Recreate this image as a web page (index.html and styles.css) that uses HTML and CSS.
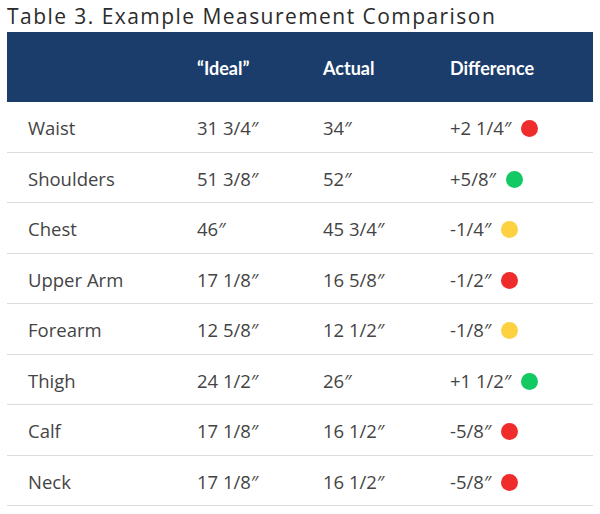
FILE: index.html
```html
<!DOCTYPE html>
<html>
<head>
<meta charset="utf-8">
<link rel="stylesheet" href="styles.css">
</head>
<body>
<div class="wrap">
  <h1 class="title">Table 3. Example Measurement Comparison</h1>
  <table class="cmp">
    <thead>
      <tr><th></th><th>“Ideal”</th><th>Actual</th><th>Difference</th></tr>
    </thead>
    <tbody>
      <tr><td>Waist</td><td>31 3/4″</td><td>34″</td><td>+2 1/4″<span class="dot red"></span></td></tr>
      <tr><td>Shoulders</td><td>51 3/8″</td><td>52″</td><td>+5/8″<span class="dot green"></span></td></tr>
      <tr><td>Chest</td><td>46″</td><td>45 3/4″</td><td>-1/4″<span class="dot yellow"></span></td></tr>
      <tr><td>Upper Arm</td><td>17 1/8″</td><td>16 5/8″</td><td>-1/2″<span class="dot red"></span></td></tr>
      <tr><td>Forearm</td><td>12 5/8″</td><td>12 1/2″</td><td>-1/8″<span class="dot yellow"></span></td></tr>
      <tr><td>Thigh</td><td>24 1/2″</td><td>26″</td><td>+1 1/2″<span class="dot green"></span></td></tr>
      <tr><td>Calf</td><td>17 1/8″</td><td>16 1/2″</td><td>-5/8″<span class="dot red"></span></td></tr>
      <tr><td>Neck</td><td>17 1/8″</td><td>16 1/2″</td><td>-5/8″<span class="dot red"></span></td></tr>
    </tbody>
  </table>
</div>
</body>
</html>
```

FILE: styles.css
```css
html, body {
  margin: 0;
  padding: 0;
  background: #ffffff;
}
.wrap {
  padding: 0 0 0 7px;
  width: 586px;
}
.title {
  margin: 0;
  height: 32px;
  font-family: "Open Sans", "Noto Sans", sans-serif;
  font-weight: 400;
  font-size: 21px;
  letter-spacing: 1.45px;
  line-height: 32px;
  color: #2b2b2b;
  white-space: nowrap;
}
.cmp {
  border-collapse: collapse;
  table-layout: fixed;
  width: 586px;
  font-family: "Open Sans", sans-serif;
}
.cmp th:nth-child(1), .cmp td:nth-child(1) { width: 169px; padding-left: 21px; }
.cmp th:nth-child(2), .cmp td:nth-child(2) { width: 126px; }
.cmp th:nth-child(3), .cmp td:nth-child(3) { width: 127px; }
.cmp th:nth-child(4), .cmp td:nth-child(4) { width: 143px; }
.cmp thead tr {
  background: #1b3d6b;
  height: 70px;
}
.cmp th {
  text-align: left;
  color: #ffffff;
  font-family: "Lato", sans-serif;
  font-weight: 700;
  font-size: 18px;
  padding: 0;
  padding-top: 1px;
  vertical-align: middle;
}
.cmp td {
  height: 47.5px;
  padding: 0;
  padding-top: 2px;
  text-align: left;
  vertical-align: middle;
  color: #444444;
  font-size: 18.5px;
  border-bottom: 1px solid #dcdcdc;
  white-space: nowrap;
}
.dot {
  display: inline-block;
  width: 17px;
  height: 17px;
  border-radius: 50%;
  margin-left: 10px;
  vertical-align: -2px;
}
.red { background: #f02b2b; }
.green { background: #12c964; }
.yellow { background: #fdd13f; }
```
